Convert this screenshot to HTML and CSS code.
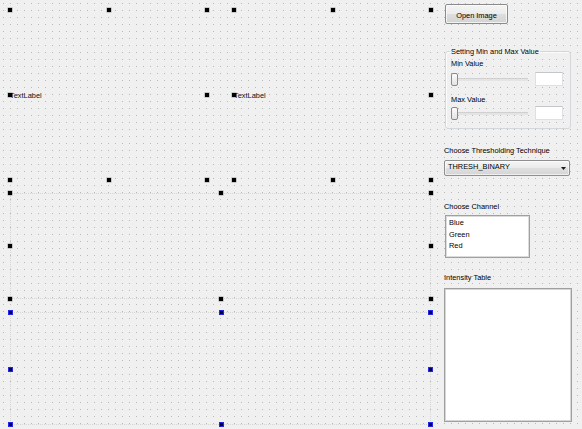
FILE: index.html
```html
<!DOCTYPE html>
<html>
<head>
<meta charset="utf-8">
<link rel="stylesheet" href="styles.css">
</head>
<body>
<div class="page">
  <div class="design">
    <div class="label-row">
      <div class="widget label-widget">
        <span class="label-text">TextLabel</span>
        <i class="h tl"></i><i class="h tm"></i><i class="h tr"></i>
        <i class="h ml"></i><i class="h mr"></i>
        <i class="h bl"></i><i class="h bm"></i><i class="h br"></i>
      </div>
      <div class="widget label-widget">
        <span class="label-text">TextLabel</span>
        <i class="h tl"></i><i class="h tm"></i><i class="h tr"></i>
        <i class="h ml"></i><i class="h mr"></i>
        <i class="h bl"></i><i class="h bm"></i><i class="h br"></i>
      </div>
    </div>
    <div class="widget frame frame-a">
      <i class="h tl"></i><i class="h tm"></i><i class="h tr"></i>
      <i class="h ml"></i><i class="h mr"></i>
      <i class="h bl"></i><i class="h bm"></i><i class="h br"></i>
    </div>
    <div class="widget frame frame-b">
      <i class="h blue tl"></i><i class="h blue tm"></i><i class="h blue tr"></i>
      <i class="h blue ml"></i><i class="h blue mr"></i>
      <i class="h blue bl"></i><i class="h blue bm"></i><i class="h blue br"></i>
    </div>
  </div>

  <div class="panel">
    <div class="button">Open Image</div>

    <fieldset class="group">
      <legend class="group-title">Setting Min and Max Value</legend>
      <div class="text min-label">Min Value</div>
      <div class="slider-row row-1">
        <div class="slider"><span class="groove"></span><span class="knob"></span></div>
        <div class="line-edit"></div>
      </div>
      <div class="text max-label">Max Value</div>
      <div class="slider-row row-2">
        <div class="slider"><span class="groove"></span><span class="knob"></span></div>
        <div class="line-edit"></div>
      </div>
    </fieldset>

    <div class="text caption cap-thresh">Choose Thresholding Technique</div>
    <div class="combo">
      <span class="combo-text">THRESH_BINARY</span>
      <svg class="combo-arrow" width="5" height="3" viewBox="0 0 5 3"><path d="M0 0H5L2.5 3Z" fill="#1a1a1a"/></svg>
    </div>

    <div class="text caption cap-channel">Choose Channel</div>
    <div class="list">
      <div class="list-item">Blue</div>
      <div class="list-item">Green</div>
      <div class="list-item">Red</div>
    </div>

    <div class="text caption cap-table">Intensity Table</div>
    <div class="table"></div>
  </div>
</div>
</body>
</html>
```
FILE: styles.css
```css
html, body {
  margin: 0;
  padding: 0;
}

.page {
  width: 582px;
  height: 429px;
  display: flex;
  overflow: hidden;
  background-color: #f0f0f0;
  background-image:
    linear-gradient(to bottom, transparent 1px, #f0f0f0 1px),
    linear-gradient(to right, #b9b9b9 1px, transparent 1px);
  background-size: 7px 7px, 7px 7px;
  background-position: 3px 3px, 3px 3px;
  font-family: "Liberation Sans", Arial, sans-serif;
  font-size: 7.4px;
  line-height: 9px;
  color: #000;
}

/* ---------- design canvas (left) ---------- */
.design {
  width: 421px;
  padding: 10px 0 0 10px;
  flex: none;
}

.label-row {
  display: flex;
  gap: 27px;
}

.widget {
  position: relative;
  box-sizing: border-box;
}

.label-widget {
  width: 197px;
  height: 170px;
  display: flex;
  align-items: center;
}

.label-text {
  display: block;
  color: #111;
}

.frame {
  width: 421px;
  outline: 1px dotted #d6d6d6;
  outline-offset: -1px;
}

.frame-a {
  margin-top: 13px;
  height: 106px;
}

.frame-b {
  margin-top: 13px;
  height: 113px;
}

.h {
  position: absolute;
  width: 4px;
  height: 4px;
  background: #000;
  box-shadow: 0 0 0 0.5px rgba(0, 0, 0, 0.35);
  z-index: 2;
}

.h.blue {
  width: 3px;
  height: 3px;
  background: #00004a;
  border: 1px solid #2424e6;
  box-shadow: none;
}

.h.tl { left: -2px; top: -2px; }
.h.tm { left: calc(50% - 2px); top: -2px; }
.h.tr { right: -2px; top: -2px; }
.h.ml { left: -2px; top: calc(50% - 2px); }
.h.mr { right: -2px; top: calc(50% - 2px); }
.h.bl { left: -2px; bottom: -2px; }
.h.bm { left: calc(50% - 2px); bottom: -2px; }
.h.br { right: -2px; bottom: -2px; }

/* ---------- right panel ---------- */
.panel {
  flex: none;
  width: 138px;
  box-sizing: border-box;
  padding-left: 13px;
  display: flex;
  flex-direction: column;
  align-items: flex-start;
}

.button {
  margin: 4px 0 0 1px;
  width: 63px;
  height: 20px;
  box-sizing: border-box;
  border: 1px solid #8b8b8b;
  border-radius: 2px;
  background: linear-gradient(to bottom, #f4f4f4 0%, #ececec 48%, #dedede 52%, #d2d2d2 100%);
  box-shadow: inset 0 0 0 1px rgba(255, 255, 255, 0.7);
  display: flex;
  align-items: center;
  justify-content: center;
  padding-top: 2px;
  color: #000;
}

.group {
  margin: 23px 0 0 1px;
  width: 126px;
  box-sizing: border-box;
  border: 1px solid #d3d7da;
  border-radius: 3px;
  box-shadow: inset 1px 1px 0 rgba(255, 255, 255, 0.8);
  padding: 0 6px 8px 5px;
  min-width: 0;
}

.group-title {
  padding: 0 1px;
  margin-left: -1px;
  line-height: 9px;
}

.text {
  line-height: 9px;
}

.min-label {
  margin-top: 3px;
}

.max-label {
  margin-top: 9px;
}

.slider-row {
  display: flex;
  gap: 7px;
  height: 14px;
}

.row-1 { margin-top: 4px; }
.row-2 { margin-top: 2px; }

.slider {
  position: relative;
  width: 77px;
  height: 14px;
}

.groove {
  position: absolute;
  left: 0;
  right: 0;
  top: 6px;
  height: 2px;
  background: #e4e4e4;
  border-top: 1px solid #d0d0d0;
}

.knob {
  position: absolute;
  left: 0;
  top: 1px;
  width: 7px;
  height: 13px;
  box-sizing: border-box;
  border: 1px solid #8a8a8a;
  border-radius: 2px;
  background: linear-gradient(to bottom, #fbfbfb, #e4e4e4);
}

.line-edit {
  width: 28px;
  height: 14px;
  box-sizing: border-box;
  background: #fff;
  border: 1px solid #dde1e5;
  border-top-color: #c3c6ca;
}

.cap-thresh { margin-top: 17px; }
.cap-channel { margin-top: 26px; }
.cap-table { margin-top: 15px; }

.combo {
  margin-top: 5px;
  width: 126px;
  height: 16px;
  box-sizing: border-box;
  border: 1px solid #8e8f8f;
  border-radius: 2px;
  background: linear-gradient(to bottom, #f5f5f5 0%, #ebebeb 48%, #dfdfdf 52%, #d5d5d5 100%);
  box-shadow: inset 0 0 0 1px rgba(255, 255, 255, 0.6);
  display: flex;
  align-items: flex-start;
  justify-content: space-between;
  padding: 1px 3px 0 3px;
}

.combo-text {
  display: block;
}

.combo-arrow {
  display: block;
  margin-top: 5px;
}

.list {
  margin: 4px 0 0 1px;
  width: 85px;
  height: 43px;
  box-sizing: border-box;
  background: #fff;
  border: 1px solid #a0a0a0;
  box-shadow: inset 0 0 0 1px #dcdcdc;
  padding: 1px 0 0 3px;
}

.list-item {
  line-height: 11.7px;
}

.table {
  margin-top: 6px;
  width: 128px;
  height: 134px;
  box-sizing: border-box;
  background: #fff;
  border: 1px solid #a0a0a0;
  box-shadow: inset 0 0 0 1px #d6d6d6;
}
```
